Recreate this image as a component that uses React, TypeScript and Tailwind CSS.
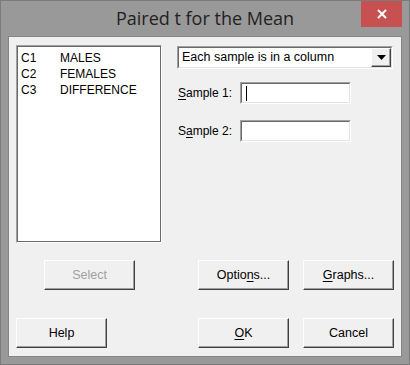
const sunken =
  "border border-t-[#a0a0a0] border-l-[#a0a0a0] border-b-white border-r-white";

function Btn({ children, disabled }: { children: React.ReactNode; disabled?: boolean }) {
  return (
    <button
      className={
        "w-[91px] h-[30px] flex items-center justify-center bg-[#f0f0f0] text-[12.5px] border border-t-white border-l-white border-b-[#404040] border-r-[#404040] shadow-[inset_-1px_-1px_0_#a0a0a0] " +
        (disabled ? "text-[#a0a0a0]" : "text-black")
      }
    >
      {children}
    </button>
  );
}

function TextBox({ cursor }: { cursor?: boolean }) {
  return (
    <div className={"w-[111px] h-[22px] " + sunken}>
      <div className="w-full h-full bg-white border border-t-[#696969] border-l-[#696969] border-b-[#e3e3e3] border-r-[#e3e3e3] flex items-center pl-[4px]">
        {cursor && <div className="w-px h-[15px] bg-black" />}
      </div>
    </div>
  );
}

export default function App() {
  const cols = [
    ["C1", "MALES"],
    ["C2", "FEMALES"],
    ["C3", "DIFFERENCE"],
  ];

  return (
    <div className="w-[410px] h-[365px] bg-[#999999] border border-[#7b7b7b] flex flex-col font-['Liberation_Sans',Arial,sans-serif] text-black">
      {/* title bar */}
      <div className="h-[35px] flex items-start pl-[48px] pr-[7px]">
        <div className="flex-1 h-[35px] flex items-center justify-center font-['Open_Sans',sans-serif] text-[18px] text-[#222222]">
          Paired t for the Mean
        </div>
        <div className="w-[41px] h-[26px] bg-[#c75050] flex items-center justify-center">
          <svg width="10" height="10" viewBox="0 0 10 10">
            <path d="M1 1 L9 9 M9 1 L1 9" stroke="white" strokeWidth="2" />
          </svg>
        </div>
      </div>

      {/* client */}
      <div className="mx-[7px] border border-[#858585] bg-[#f0f0f0] h-[321px] pt-[8px] pl-[7px] pr-[7px]">
        <div className="flex">
          {/* column list */}
          <div className={"w-[146px] h-[198px] " + sunken}>
            <div className="w-full h-full bg-white border border-[#696969] pt-[3px] pl-[3px] text-[12px] leading-[16px]">
              {cols.map(([c, n]) => (
                <div key={c} className="flex">
                  <span className="w-[39px]">{c}</span>
                  <span>{n}</span>
                </div>
              ))}
            </div>
          </div>

          {/* right side */}
          <div className="ml-[15px] w-[217px] pt-[1px]">
            <div className={"w-[216px] h-[23px] " + sunken}>
              <div className="w-full h-full bg-white border border-t-[#696969] border-l-[#696969] border-b-[#e3e3e3] border-r-[#e3e3e3] flex items-center">
                <span className="flex-1 pl-[3px] text-[12.5px]">Each sample is in a column</span>
                <div className="w-[20px] h-[19px] bg-[#f0f0f0] border border-t-white border-l-white border-b-[#404040] border-r-[#404040] shadow-[inset_-1px_-1px_0_#a0a0a0] flex items-center justify-center">
                  <svg width="9" height="5" viewBox="0 0 9 5">
                    <path d="M0 0 H9 L4.5 5 Z" fill="black" />
                  </svg>
                </div>
              </div>
            </div>

            <div className="flex items-center mt-[13px]">
              <span className="w-[63px] pl-[1px] text-[12px]">
                <u className="underline-offset-2">S</u>ample 1:
              </span>
              <TextBox cursor />
            </div>
            <div className="flex items-center mt-[16px]">
              <span className="w-[63px] pl-[1px] text-[12px]">
                S<u className="underline-offset-2">a</u>mple 2:
              </span>
              <TextBox />
            </div>
          </div>
        </div>

        <div className="flex mt-[17px]">
          <div className="ml-[28px]">
            <Btn disabled>Select</Btn>
          </div>
          <div className="ml-[63px]">
            <Btn>
              <span>
                Optio<u className="underline-offset-2">n</u>s...
              </span>
            </Btn>
          </div>
          <div className="ml-[14px]">
            <Btn>
              <span>
                <u className="underline-offset-2">G</u>raphs...
              </span>
            </Btn>
          </div>
        </div>

        <div className="flex mt-[28px]">
          <Btn>Help</Btn>
          <div className="ml-[91px]">
            <Btn>
              <span>
                <u className="underline-offset-2">O</u>K
              </span>
            </Btn>
          </div>
          <div className="ml-[14px]">
            <Btn>Cancel</Btn>
          </div>
        </div>
      </div>
    </div>
  );
}
